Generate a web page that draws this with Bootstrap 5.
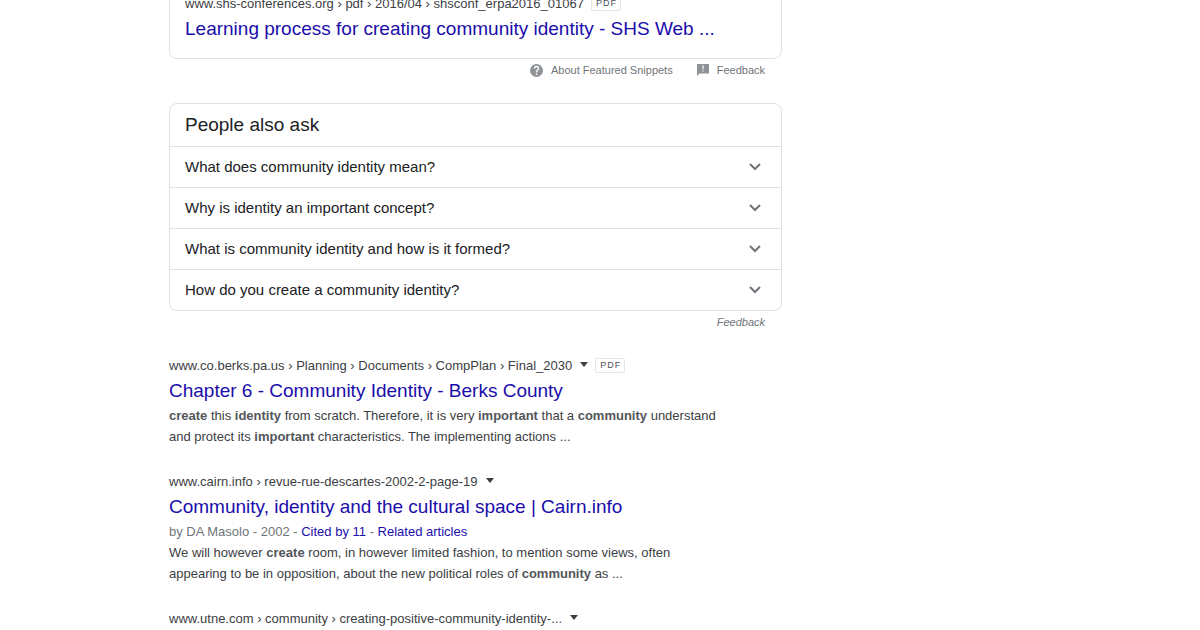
<!DOCTYPE html>
<html lang="en">
<head>
<meta charset="utf-8">
<meta name="viewport" content="width=device-width, initial-scale=1">
<title>community identity - Search</title>
<link href="https://cdn.jsdelivr.net/npm/bootstrap@5.3.0/dist/css/bootstrap.min.css" rel="stylesheet">
<style>
  body { font-family: "Liberation Sans", Arial, sans-serif; font-size: 13px; line-height: 21px; color: #3c4043; background: #fff; overflow-x: hidden; }
  a { color: #1a0dab; text-decoration: none; }
  a:hover { text-decoration: underline; }
  .results { margin-left: 14%; max-width: 614px; padding-left: 1px; }
  .panel { border: 1px solid #dfe1e5; border-radius: 8px; --bs-card-bg: #fff; color: inherit; }
  /* The snippet card starts above the fold line of the scrolled list */
  .snippet { margin-top: -24px; padding: 16px 15px 15px; }
  .crumb { height: 21px; color: #3c4043; white-space: nowrap; }
  .result-title { font-size: 19px; line-height: 28px; font-weight: 400; margin: 1px 0 0; color: #1a0dab; }
  .tag { font-size: 9px; line-height: 13px; letter-spacing: 1px; border: 1px solid #e4e6e9; border-radius: 2px; padding: 0 3px 0 4px; margin-left: 7px; color: #4d5156; }
  .more { border: 0; background: none; padding: 0; width: 8px; height: 21px; margin-left: 8px; display: flex; align-items: center; }
  .more svg { margin-bottom: 2px; }
  .notes { font-size: 11px; line-height: 22px; padding-right: 17px; color: #70757a; }
  .notes a { color: inherit; }
  .notes svg { fill: #8f9296; }
  .ask { margin-top: 22px; }
  .ask-head { font-size: 19px; line-height: 42px; font-weight: 400; margin: 0; padding: 0 15px; color: #202124; }
  .question { font-size: 15px; line-height: 40px; padding: 0 20px 0 15px; border: 0; border-top: 1px solid #dfe1e5; background: none; color: #202124; }
  .result { margin-bottom: 24px; max-width: 564px; }
  .first-gap { margin-top: 22px; }
  .result p { margin: 0; }
  .result b { color: #52565a; }
  .byline { color: #70757a; }
</style>
</head>
<body>
<svg class="d-none" aria-hidden="true">
  <symbol id="caret" viewBox="0 0 8 5"><path d="M0 0h8L4 5z" fill="#3c4043"/></symbol>
  <symbol id="chevron" viewBox="0 0 12 8"><path d="M1 1l5 5 5-5" fill="none" stroke="#70757a" stroke-width="2"/></symbol>
</svg>
<main class="results">
  <section class="card panel snippet">
    <div class="crumb d-flex align-items-center"><span>www.shs-conferences.org › pdf › 2016/04 › shsconf_erpa2016_01067</span><span class="tag">PDF</span></div>
    <h3 class="result-title"><a href="#">Learning process for creating community identity - SHS Web ...</a></h3>
  </section>
  <div class="notes d-flex justify-content-end">
    <a href="#" class="d-flex align-items-center me-4"><svg class="me-2" width="13" height="13" viewBox="0 0 24 24"><path d="M12 0a12 12 0 1 0 0 24 12 12 0 0 0 0-24zm1.3 20.2h-2.6v-2.6h2.6zm2.6-9.2-1.1 1.2c-1 1-1.5 1.7-1.5 3.4h-2.6v-.7c0-1.3.5-2.5 1.5-3.4l1.5-1.6c.5-.4.7-1 .7-1.7a2.4 2.4 0 0 0-4.800 0H7.200a4.800 4.800 0 0 1 9.600 0c0 1.100-.4 2-1 2.800z"/></svg>About Featured Snippets</a>
    <a href="#" class="d-flex align-items-center"><svg class="me-2" width="12" height="12" viewBox="0 0 24 24"><path d="M0 0h24v19H5l-5 5zm10.800 3v7h2.400V3zm0 9.500V15h2.400v-2.500z"/></svg>Feedback</a>
  </div>
  <section class="card panel ask">
    <h2 class="ask-head">People also ask</h2>
    <button type="button" class="question d-flex justify-content-between align-items-center text-start">What does community identity mean?<svg width="12" height="8"><use href="#chevron"/></svg></button>
    <button type="button" class="question d-flex justify-content-between align-items-center text-start">Why is identity an important concept?<svg width="12" height="8"><use href="#chevron"/></svg></button>
    <button type="button" class="question d-flex justify-content-between align-items-center text-start">What is community identity and how is it formed?<svg width="12" height="8"><use href="#chevron"/></svg></button>
    <button type="button" class="question d-flex justify-content-between align-items-center text-start">How do you create a community identity?<svg width="12" height="8"><use href="#chevron"/></svg></button>
  </section>
  <div class="notes d-flex justify-content-end fst-italic"><a href="#">Feedback</a></div>

  <article class="result first-gap">
    <div class="crumb d-flex align-items-center"><span>www.co.berks.pa.us › Planning › Documents › CompPlan › Final_2030</span><button type="button" class="more" aria-label="More options"><svg width="8" height="5"><use href="#caret"/></svg></button><span class="tag">PDF</span></div>
    <h3 class="result-title"><a href="#">Chapter 6 - Community Identity - Berks County</a></h3>
    <p><b>create</b> this <b>identity</b> from scratch. Therefore, it is very <b>important</b> that a <b>community</b> understand<br>and protect its <b>important</b> characteristics. The implementing actions ...</p>
  </article>
  <article class="result">
    <div class="crumb d-flex align-items-center"><span>www.cairn.info › revue-rue-descartes-2002-2-page-19</span><button type="button" class="more" aria-label="More options"><svg width="8" height="5"><use href="#caret"/></svg></button></div>
    <h3 class="result-title"><a href="#">Community, identity and the cultural space | Cairn.info</a></h3>
    <p class="byline">by DA Masolo - 2002 - <a href="#">Cited by 11</a> - <a href="#">Related articles</a></p>
    <p>We will however <b>create</b> room, in however limited fashion, to mention some views, often<br>appearing to be in opposition, about the new political roles of <b>community</b> as ...</p>
  </article>
  <article class="result mb-0">
    <div class="crumb d-flex align-items-center"><span>www.utne.com › community › creating-positive-community-identity-...</span><button type="button" class="more" aria-label="More options"><svg width="8" height="5"><use href="#caret"/></svg></button></div>
  </article>
</main>
<script src="https://cdn.jsdelivr.net/npm/bootstrap@5.3.0/dist/js/bootstrap.bundle.min.js"></script>
</body>
</html>
